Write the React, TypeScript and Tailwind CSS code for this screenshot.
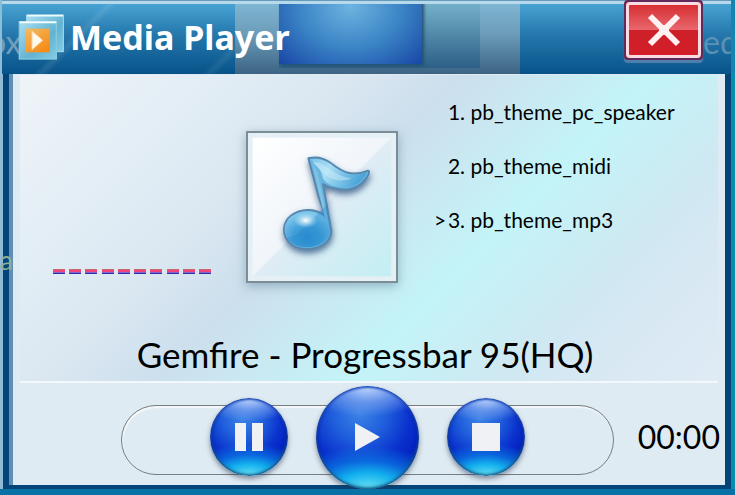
import React from "react";

const tracks = ["pb_theme_pc_speaker", "pb_theme_midi", "pb_theme_mp3"];
const current = 2;

const AppIcon = () => (
  <svg width="48" height="48" viewBox="0 0 144 144" aria-hidden="true">
    <defs>
      <linearGradient id="sheet" x1="0" y1="0" x2="1" y2="1">
        <stop offset="0" stopColor="#a9dfef" />
        <stop offset="0.6" stopColor="#63b2d2" />
        <stop offset="1" stopColor="#83cde3" />
      </linearGradient>
      <linearGradient id="orange" x1="0" y1="0" x2="0.7" y2="1">
        <stop offset="0" stopColor="#f3ba62" />
        <stop offset="1" stopColor="#f68b17" />
      </linearGradient>
    </defs>
    <rect x="26" y="6" width="110" height="110" fill="url(#sheet)" stroke="#a8dff0" strokeWidth="3" />
    <path d="M28 8h107" stroke="#eefaff" strokeWidth="5" />
    <rect x="4" y="27" width="111" height="111" fill="url(#sheet)" stroke="#82cbe1" strokeWidth="4" />
    <path d="M4 28h111" stroke="#f1fbff" strokeWidth="6" />
    <rect x="24" y="47" width="72" height="71" fill="url(#orange)" />
    <path d="M42 54L74 82L42 110z" fill="#fffaf0" stroke="#ffd59a" strokeWidth="3" />
  </svg>
);

const Note = () => (
  <svg className="block w-full h-full" viewBox="38 38 444 444" role="img" aria-label="Music note">
    <defs>
      <linearGradient id="art" x1="0" y1="0" x2="1" y2="1">
        <stop offset="0" stopColor="#ffffff" />
        <stop offset="0.495" stopColor="#f0f5fa" />
        <stop offset="0.505" stopColor="#dfecf5" />
        <stop offset="1" stopColor="#c2eff3" />
      </linearGradient>
      <linearGradient id="flag" x1="0" y1="0" x2="1" y2="0.3">
        <stop offset="0" stopColor="#7cc4e8" />
        <stop offset="0.4" stopColor="#a9def4" />
        <stop offset="1" stopColor="#4ba5d9" />
      </linearGradient>
      <radialGradient id="head" cx="0.5" cy="0.72" r="0.65">
        <stop offset="0" stopColor="#2d8ecf" />
        <stop offset="0.5" stopColor="#429fd8" />
        <stop offset="1" stopColor="#7fc6ec" />
      </radialGradient>
      <radialGradient id="shine">
        <stop offset="0" stopColor="#ffffff" />
        <stop offset="1" stopColor="#c5e8f8" stopOpacity="0" />
      </radialGradient>
      <filter id="noteShadow" x="-20%" y="-20%" width="140%" height="150%">
        <feDropShadow dx="2" dy="11" stdDeviation="9" floodColor="#254f7b" floodOpacity="0.75" />
      </filter>
    </defs>
    <rect x="33" y="33" width="454" height="454" fill="#e4f0f6" />
    <rect x="52" y="52" width="416" height="416" fill="url(#art)" />
    <g filter="url(#noteShadow)" stroke="#5887ae" strokeWidth="6" strokeLinejoin="round">
      <path
        d="M219 114C241 108 266 113 286 128C316 151 347 172 398 151C402 151 402 157 399 163C380 197 350 211 314 207C290 204 274 198 263 191L288 330C290 361 257 386 215 386C173 386 146 362 146 327C147 291 181 270 217 269C238 269 255 275 269 286L250 230L232 162z"
        fill="#67b5df"
      />
    </g>
    <path d="M224 117C244 113 269 118 286 131C317 156 350 174 395 156C376 195 347 203 317 200C286 198 265 187 260 164C256 146 240 129 224 117z" fill="url(#flag)" />
    <path d="M230 129L246 155L280 312L267 287z" fill="#80c2e4" />
    <ellipse cx="215" cy="327" rx="67" ry="54" fill="url(#head)" />
    <path d="M253 274L275 252L286 330C286 362 250 381 217 381C185 382 164 368 154 353C193 346 226 301 253 274z" fill="#1f87cd" opacity="0.32" />
    <path d="M231 126C270 120 285 165 349 174C322 186 292 181 269 164z" fill="#d3effb" opacity="0.45" />
    <ellipse cx="211" cy="300" rx="36" ry="23" fill="url(#shine)" />
  </svg>
);

const Orb = ({ label, size, glyph }: { label: string; size: string; glyph: React.ReactNode }) => (
  <button
    type="button"
    aria-label={label}
    className={`${size} shrink-0 flex items-center justify-center rounded-full bg-[radial-gradient(60%_28%_at_50%_2%,#b9d2fb_0%,#7ea4f0aa_50%,#4a82e600_100%),radial-gradient(80%_42%_at_50%_100%,#6be4f2_0%,#12aeee_38%,#0b82e6aa_65%,#0874e200_100%),radial-gradient(circle_at_42%_26%,#3b83e6_0%,#1f5edc_28%,#0a32cd_52%,#0424c4_66%,#0a2b9a_80%)] shadow-[0_3px_5px_#26324d80,inset_2px_0_3px_#061d7788,inset_-2px_0_3px_#061d7788,inset_0_2px_2px_#3e74df,inset_0_-2px_3px_#2892ae]`}
  >
    {glyph}
  </button>
);

const App = () => {
  return (
    <div className="relative min-h-screen flex flex-col overflow-hidden bg-[#044579] font-[Lato,'Liberation_Sans',sans-serif] text-black border-b-[6px] border-[#0872a6]">
      <div className="absolute inset-0 border-l-[3px] border-r-4 border-l-[#8fb9d4] border-r-[#078db0]" />
      <div className="absolute top-[74px] bottom-1 left-[9px] w-1 bg-[#5e90b7]" />
      <span aria-hidden="true" className="absolute left-0 top-[244px] w-3 overflow-hidden text-[26px] leading-8 text-[#8fae9a]">a</span>

      <header className="relative h-[74px] shrink-0 flex items-center justify-between pl-4 pr-7 overflow-hidden bg-[linear-gradient(180deg,#4ca9d8_0%,#2679ad_45%,#075389_100%)] border-l-2 border-r-4 border-l-[#8dbdd9] border-r-[#1286b2]">
        <div className="absolute inset-0 bg-[linear-gradient(135deg,transparent_13%,#ffffff18_14%,transparent_15%,transparent_34%,#ffffff12_35%,transparent_36%)]" />
        {/* window that shows through the glass title bar */}
        <div className="absolute inset-y-0 left-[32%] w-[285px] bg-[linear-gradient(180deg,#81b9d6_0%,#6c9dba_45%,#3c6384_100%)]">
          <div className="absolute top-0 left-11 right-10 h-[68px] bg-[linear-gradient(180deg,#78b5cd,#2c5f86)]" />
          <div className="absolute top-0 left-11 w-[143px] h-[64px] bg-[radial-gradient(ellipse_at_50%_10%,#6db4e0_0%,#3c85c6_50%,#1746a5_100%)] shadow-[2px_2px_3px_#245175]" />
        </div>
        <div className="absolute top-0 inset-x-0 h-1 border-t border-[#659abb] bg-[#b6d9ec]" />
        <span aria-hidden="true" className="absolute left-[-14px] top-6 text-[32px] leading-9 text-[#719ebb]">ox</span>
        <span aria-hidden="true" className="absolute left-[701px] top-6 text-[32px] leading-9 text-[#5b91b5]">ed</span>
        <div className="relative flex items-center gap-1">
          <AppIcon />
          <h1 className="font-['Noto_Sans',sans-serif] text-[34px] leading-10 font-bold text-white">Media Player</h1>
        </div>
        <button type="button" aria-label="Close" className="relative self-start w-[79px] h-[60px] shrink-0 flex items-center justify-center rounded border-2 border-[#622a5c] bg-[#df2e36] shadow-[0_3px_1px_#5280ac]">
          <span className="w-full h-full flex items-center justify-center rounded-sm border-[3px] border-[#f8dce1] bg-[linear-gradient(180deg,#d72f34_0%,#e8666b_49%,#cd2028_50%,#d31e29_100%)]">
            <svg width="34" height="34" viewBox="0 0 34 34" aria-hidden="true">
              <path d="M3 3L31 31M31 3L3 31" stroke="#fff0f2" strokeWidth="6" />
              <path d="M12 12h10v10h-10z" fill="#fff0f2" />
            </svg>
          </span>
        </button>
      </header>

      <main className="relative flex-1 flex flex-col ml-[13px] mr-[10px] mb-1 bg-[#dfebf3]">
        <section className="flex-1 flex flex-col mx-[7px] mt-px border-b-2 border-[#f2f8fc] bg-[linear-gradient(135deg,#eff4f8_0%,#e2edf5_20%,#dae7f1_33%,#ccdfed_44%,#cae8f1_52%,#c3f4f8_63%,#c8eff5_70%,#cfe8f2_78%,#d8e8f3_87%,#dfebf5_100%)]">
          <div className="flex-1 grid grid-cols-[12fr_152px_17fr]">
            <div className="flex justify-between items-start w-[158px] ml-[33px] mt-[194px]" aria-label="Visualizer">
              {Array.from({ length: 10 }, (_, i) => (
                <span key={i} className="w-3 h-[5px] bg-[linear-gradient(180deg,#c9686f_0_20%,#f0447c_20%_60%,#8a62cc_60%_80%,#2c2fa8_80%)]" />
              ))}
            </div>
            <div className="mt-[56px] h-[152px] border-2 border-[#7b8d95] shadow-[0_3px_10px_#58799180]">
              <Note />
            </div>
            <ol className="pt-[10px] pl-9 text-[21px] leading-[54px]">
              {tracks.map((track, i) => (
                <li key={track} className="flex whitespace-nowrap">
                  <span className="w-[14px]">{i === current ? ">" : ""}</span>
                  <span>{i + 1}. {track}</span>
                </li>
              ))}
            </ol>
          </div>
          <h2 className="pb-[7px] pr-2 text-center text-[35px] leading-10 whitespace-nowrap">Gemfire - Progressbar 95(HQ)</h2>
        </section>

        <footer className="h-[102px] shrink-0 flex items-center pt-3 pl-[108px] pr-[5px]">
          <div className="flex-1 h-[70px] flex items-center justify-center gap-7 pb-[6px] rounded-full border border-[#777d80] shadow-[inset_1px_2px_1px_#f4f8fa]">
            <Orb
              label="Pause"
              size="size-[78px]"
              glyph={<svg width="28" height="28" viewBox="0 0 28 28"><path d="M0 0h11v28H0zM17 0h11v28H17z" fill="#f0f1f4" /></svg>}
            />
            <Orb
              label="Play"
              size="size-[103px]"
              glyph={<svg width="26" height="28" viewBox="0 0 26 28"><path d="M1 0L26 14L1 28z" fill="#f0f1f4" /></svg>}
            />
            <Orb
              label="Stop"
              size="size-[78px]"
              glyph={<svg width="28" height="28" viewBox="0 0 28 28"><path d="M0 0h28v28H0z" fill="#f0f1f4" /></svg>}
            />
          </div>
          <time className="ml-6 pb-[6px] text-[32px] leading-10">00:00</time>
        </footer>
      </main>
    </div>
  );
};

export default App;
